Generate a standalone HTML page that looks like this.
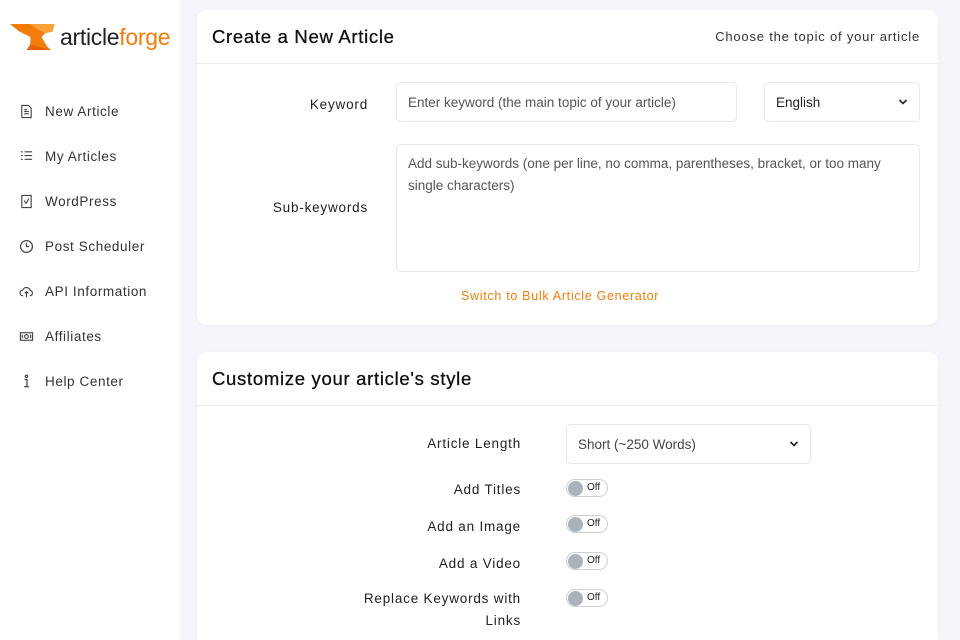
<!DOCTYPE html>
<html style="overflow:hidden;height:640px"><head><meta charset="utf-8"><style>
*{box-sizing:border-box;margin:0;padding:0}
body{width:960px;height:640px;overflow:hidden;background:#f4f6fb;font-family:"Liberation Sans",sans-serif;position:relative;color:#222}
.side{position:absolute;left:0;top:0;width:180px;height:640px;background:#fff}
.logo{position:absolute;left:10px;top:22px;display:flex;align-items:center}
.logo span{font-size:23px;letter-spacing:-0.3px}
.nav{position:absolute;left:19px;font-size:13.5px;letter-spacing:0.6px;color:#333;display:flex;align-items:center}
.nav svg{width:15px;height:15px;margin-right:11px}
.card{position:absolute;left:197px;width:741px;background:#fff;border-radius:10px;box-shadow:0 1px 4px rgba(0,0,0,0.04)}
.hd{height:54px;border-bottom:1px solid #eceef3;display:flex;align-items:center;justify-content:space-between;padding:0 18px 0 15px}
.hd h2{font-size:18.5px;font-weight:normal;letter-spacing:0.7px;color:#111;-webkit-text-stroke:0.3px #111}
.hd small{font-size:13px;letter-spacing:0.8px;color:#333}
.lbl{position:absolute;font-size:13.5px;letter-spacing:0.8px;color:#222;text-align:right}
.in{position:absolute;border:1px solid #e6e8ee;border-radius:5px;font-size:13.5px;color:#555;padding:0 11px;display:flex;align-items:center}
.tg{position:absolute;left:369px;width:42px;height:18px;border:1px solid #ccd0d6;border-radius:9px}
.tg:before{content:"";position:absolute;left:1px;top:1px;width:15px;height:15px;border-radius:50%;background:#aab2bc}
.tg:after{content:"Off";position:absolute;left:20px;top:2px;font-size:10px;color:#222}
</style></head><body>
<div class="side">
 <div class="logo">
  <svg width="50" height="30" viewBox="0 0 54 32"><path d="M0 2 L22 2 L48 2 L46 10 L38 12 L34 16 L40 26 L44 30 L18 30 L22 24 L22 16 L10 10 Z" fill="#f47c0a"/><path d="M22 2 L48 2 L46 10 L38 12 L30 8Z" fill="#f9a23a"/><path d="M18 30 L22 24 L30 26 L44 30Z" fill="#e86200"/></svg>
  <span style="color:#222">article</span><span style="color:#f47c0a">forge</span>
 </div>
 <div class="nav" style="top:104px"><svg viewBox="0 0 16 16" fill="none" stroke="#444" stroke-width="1.2"><path d="M3 1.5h7l3 3v10H3z M5.5 8h5 M5.5 10.5h5 M5.5 6h3"/></svg>New Article</div>
 <div class="nav" style="top:149px"><svg viewBox="0 0 16 16" fill="none" stroke="#444" stroke-width="1.2"><path d="M2 3h2 M2 7h2 M2 11h2 M6 3h8 M6 7h8 M6 11h8"/></svg>My Articles</div>
 <div class="nav" style="top:194px"><svg viewBox="0 0 16 16" fill="none" stroke="#444" stroke-width="1.2"><path d="M3 1.5h10v13H3z M5.5 7l2 3 3-5"/></svg>WordPress</div>
 <div class="nav" style="top:239px"><svg viewBox="0 0 16 16" fill="none" stroke="#444" stroke-width="1.3"><circle cx="8" cy="8" r="6.3"/><path d="M8 4v4h3"/></svg>Post Scheduler</div>
 <div class="nav" style="top:284px"><svg viewBox="0 0 16 16" fill="none" stroke="#444" stroke-width="1.2"><path d="M4.5 12.5H4a3 3 0 0 1 0-6 4.2 4.2 0 0 1 8 0.5 2.8 2.8 0 0 1 0 5.5h-0.5 M8 14V8 M6 10l2-2 2 2"/></svg>API Information</div>
 <div class="nav" style="top:329px"><svg viewBox="0 0 16 16" fill="none" stroke="#444" stroke-width="1.2"><rect x="1.5" y="4" width="13" height="8"/><circle cx="8" cy="8" r="2"/><path d="M3.5 6v4 M12.5 6v4"/></svg>Affiliates</div>
 <div class="nav" style="top:374px"><svg viewBox="0 0 16 16" fill="none" stroke="#444" stroke-width="1.3"><circle cx="8" cy="2.5" r="1.2"/><path d="M6 6h2.5v7 M5.5 13.5h5"/></svg>Help Center</div>
</div>

<div class="card" style="top:10px;height:315px">
 <div class="hd"><h2>Create a New Article</h2><small>Choose the topic of your article</small></div>
 <div class="lbl" style="right:570px;top:87px">Keyword</div>
 <div class="in" style="left:199px;top:72px;width:341px;height:40px">Enter keyword (the main topic of your article)</div>
 <div class="in" style="left:567px;top:72px;width:156px;height:40px;color:#222;justify-content:space-between">English<svg width="10" height="8" viewBox="0 0 10 8"><path d="M1.5 2l3.5 3.5L8.5 2" fill="none" stroke="#222" stroke-width="1.6"/></svg></div>
 <div class="lbl" style="right:570px;top:190px">Sub-keywords</div>
 <div class="in" style="left:199px;top:134px;width:524px;height:128px;align-items:flex-start;padding-top:8px;line-height:22px">Add sub-keywords (one per line, no comma, parentheses, bracket, or too many single characters)</div>
 <div style="position:absolute;left:264px;top:279px;font-size:12.5px;letter-spacing:0.7px;color:#f47c0a">Switch to Bulk Article Generator</div>
</div>

<div class="card" style="top:352px;height:288px;border-radius:10px 10px 0 0">
 <div class="hd"><h2>Customize your article's style</h2></div>
 <div class="lbl" style="right:417px;top:84px">Article Length</div>
 <div class="in" style="left:369px;top:72px;width:245px;height:40px;color:#444;justify-content:space-between">Short (~250 Words)<svg width="10" height="8" viewBox="0 0 10 8"><path d="M1.5 2l3.5 3.5L8.5 2" fill="none" stroke="#222" stroke-width="1.6"/></svg></div>
 <div class="lbl" style="right:417px;top:130px">Add Titles</div><div class="tg" style="top:127px"></div>
 <div class="lbl" style="right:417px;top:167px">Add an Image</div><div class="tg" style="top:163px"></div>
 <div class="lbl" style="right:417px;top:204px">Add a Video</div><div class="tg" style="top:200px"></div>
 <div class="lbl" style="right:417px;line-height:22px;top:236px">Replace Keywords with<br>Links</div><div class="tg" style="top:237px"></div>
</div>
</body></html>
